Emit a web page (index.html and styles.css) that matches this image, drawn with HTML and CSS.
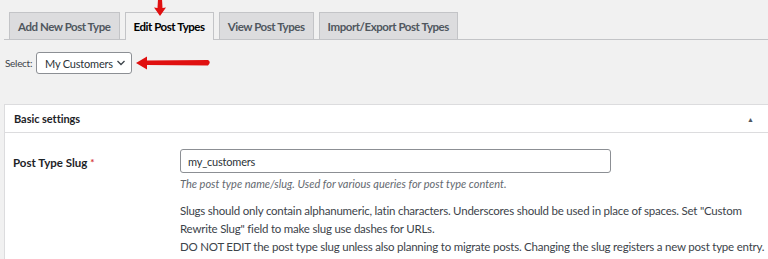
FILE: index.html
```html
<!DOCTYPE html>
<html>
<head>
<meta charset="utf-8">
<link rel="stylesheet" href="styles.css">
</head>
<body>
<div class="wrap">
  <nav class="tabs">
    <span class="tab">Add New Post Type</span>
    <span class="tab active">Edit Post Types</span>
    <span class="tab">View Post Types</span>
    <span class="tab">Import/Export Post Types</span>
    <svg class="arrow-down" width="14" height="18" viewBox="0 0 14 18"><path d="M5 0 L9 0 L9.5 9 L13 8.5 L7 17 L1 8.5 L4.5 9 Z" fill="#e01010"/></svg>
  </nav>
  <div class="select-row">
    <label class="select-label">Select:</label>
    <div class="select"><span>My Customers</span><svg class="chev" width="10" height="6" viewBox="0 0 10 6"><path d="M1.5 1 L5 4.5 L8.5 1" fill="none" stroke="#3c434a" stroke-width="1.3"/></svg></div>
    <svg class="arrow-left" width="76" height="14" viewBox="0 0 76 14"><path d="M0 7 L11 0.5 L11 4.5 L72 4 Q75.5 6 72 9.5 L11 9 L11 13.5 Z" fill="#e01010"/></svg>
  </div>
  <section class="panel">
    <header class="panel-head"><h2>Basic settings</h2><span class="toggle">▲</span></header>
    <div class="panel-body">
      <div class="field">
        <div class="label">Post Type Slug <span class="req">*</span></div>
        <div class="control">
          <div class="input">my_customers</div>
          <p class="desc">The post type name/slug. Used for various queries for post type content.</p>
          <p class="note">Slugs should only contain alphanumeric, latin characters. Underscores should be used in place of spaces. Set "Custom Rewrite Slug" field to make slug use dashes for URLs.</p>
          <p class="note">DO NOT EDIT the post type slug unless also planning to migrate posts. Changing the slug registers a new post type entry.</p>
        </div>
      </div>
    </div>
  </section>
</div>
</body>
</html>
```
FILE: styles.css
```css
html, body { margin: 0; padding: 0; }
body {
  background: #f1f1f1;
  font-family: Lato, "Open Sans", sans-serif;
  color: #3c434a;
  font-size: 12px;
  overflow: hidden;
  width: 768px;
  height: 259px;
}
.wrap { padding: 0 0 0 4px; }
.tabs {
  position: relative;
  display: flex;
  gap: 5px;
  padding: 12px 0 0 5px;
  border-bottom: 1px solid #c3c4c7;
  height: 27px;
}
.tab {
  display: flex;
  align-items: center;
  padding: 0 8px;
  height: 26px;
  background: #dcdcde;
  border: 1px solid #c3c4c7;
  border-bottom: none;
  font-weight: 700;
  font-size: 11.5px;
  letter-spacing: -0.45px;
  color: #50575e;
  margin-bottom: -1px;
  white-space: nowrap;
}
.tab.active {
  background: #f1f1f1;
  color: #000;
  height: 27px;
}
.arrow-down { position: absolute; left: 149px; top: -1px; }
.select-row {
  display: flex;
  align-items: center;
  height: 26px;
  margin-top: 10px;
  position: relative;
}
.select-label { font-size: 10px; letter-spacing: -0.3px; color: #3c434a; margin-left: 1px; }
.select {
  margin-left: 4px;
  width: 96px;
  height: 22px;
  box-sizing: border-box;
  border: 1px solid #8c8f94;
  border-radius: 3px;
  background: #fff;
  display: flex;
  align-items: center;
  justify-content: space-between;
  padding: 0 5px 0 8px;
  font-size: 11px;
  letter-spacing: -0.2px;
  color: #2c3338;
  white-space: nowrap;
}
.chev { flex: none; }
.arrow-left { margin-left: 4px; }
.panel {
  margin-top: 28px;
  background: #fff;
  border: 1px solid #dcdcde;
  border-right: none;
}
.panel-head {
  display: flex;
  align-items: center;
  justify-content: space-between;
  height: 27px;
  border-bottom: 1px solid #dcdcde;
  padding: 0 14px 0 9px;
}
.panel-head h2 { margin: 0; font-size: 11px; font-weight: 700; color: #1d2327; letter-spacing: -0.05px; }
.toggle { font-size: 7px; color: #50575e; }
.panel-body { padding: 16px 0 24px 8px; }
.field { display: flex; }
.label { width: 167px; font-weight: 700; font-size: 11.5px; color: #1d2327; padding-top: 7px; }
.req { color: #d63638; font-size: 10px; vertical-align: top; }
.control { flex: 1; }
.input {
  width: 431px;
  height: 24px;
  box-sizing: border-box;
  border: 1px solid #8c8f94;
  border-radius: 3px;
  display: flex;
  align-items: center;
  padding: 0 7px;
  font-size: 11px;
  letter-spacing: -0.2px;
  color: #2c3338;
}
.desc { margin: 4px 0 0; font-style: italic; font-size: 11px; color: #646970; }
.note { margin: 0; font-size: 11.5px; letter-spacing: -0.22px; line-height: 18px; color: #3c434a; }
.desc + .note { margin-top: 12px; }
```
